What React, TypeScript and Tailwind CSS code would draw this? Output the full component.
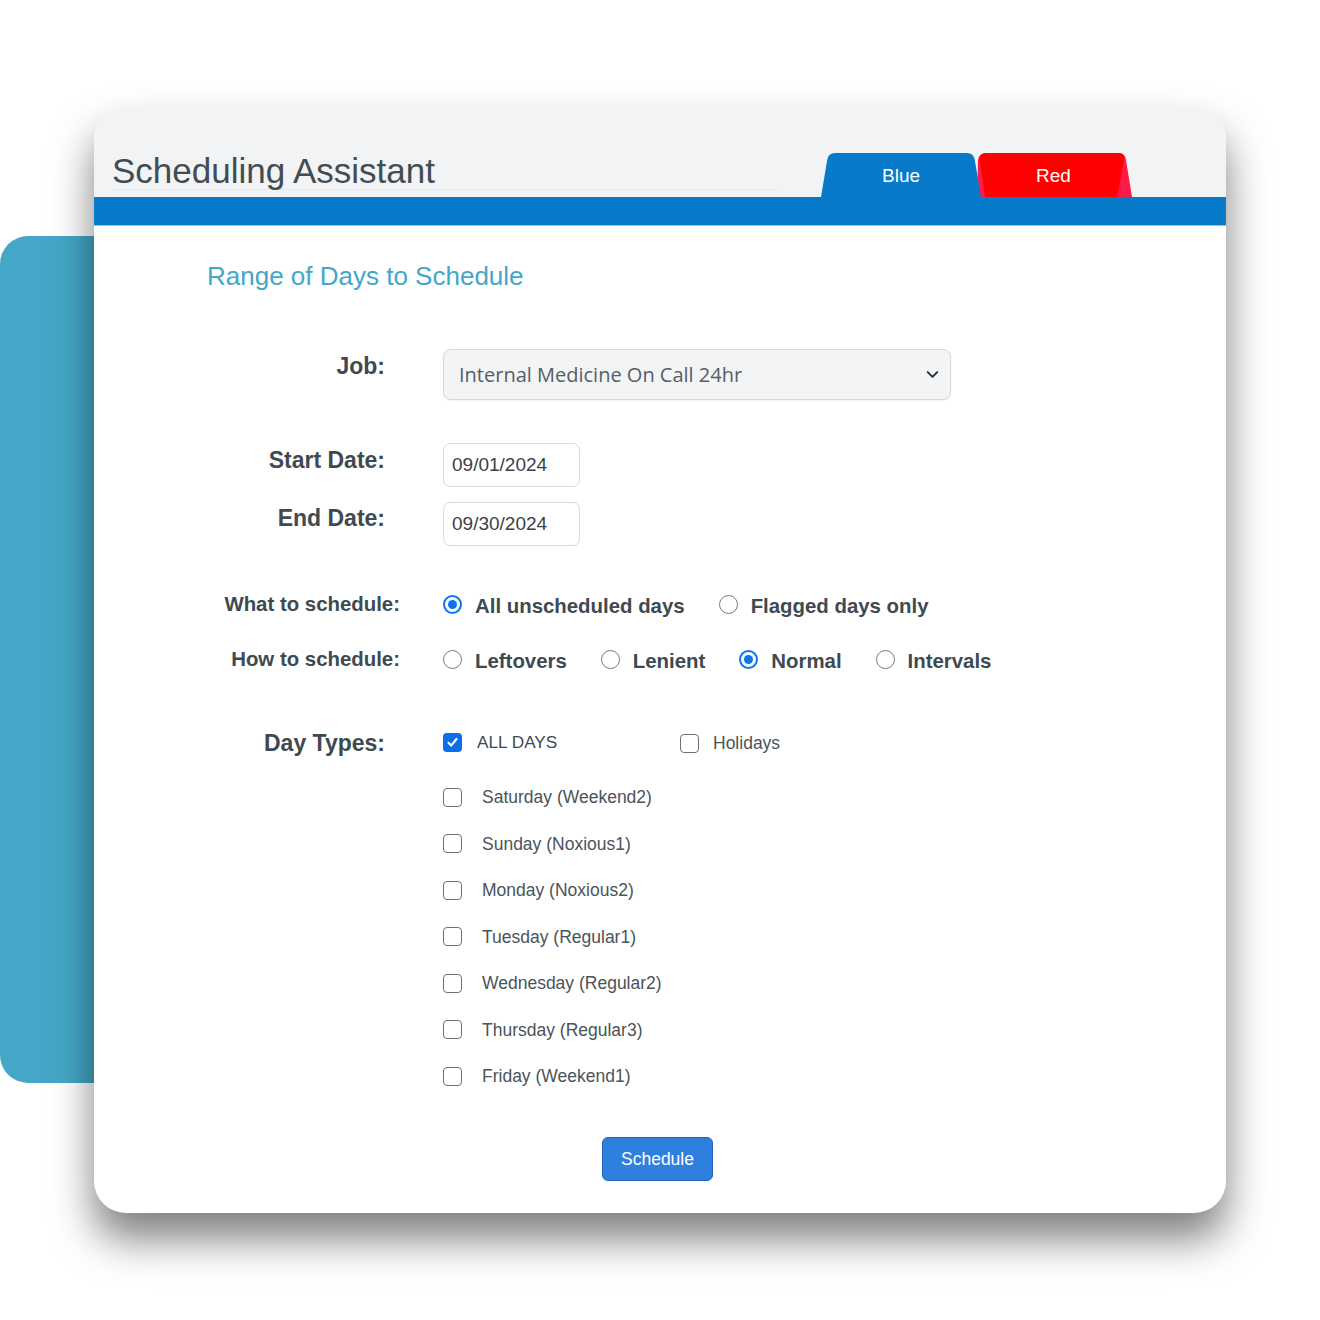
import React from "react";
import { ChevronDown } from "lucide-react";

function Radio({ checked }: { checked?: boolean }) {
  return checked ? (
    <span className="flex h-[19px] w-[19px] shrink-0 items-center justify-center rounded-full border-[2.5px] border-[#0c74ee] bg-white">
      <span className="h-[9px] w-[9px] rounded-full bg-[#0c74ee]" />
    </span>
  ) : (
    <span className="h-[19px] w-[19px] shrink-0 rounded-full border-[1.5px] border-[#7a7a7a] bg-white" />
  );
}

function Check({ checked }: { checked?: boolean }) {
  return checked ? (
    <span className="flex h-[19px] w-[19px] shrink-0 items-center justify-center rounded-[4px] bg-[#0c6fe9]">
      <svg width="13" height="13" viewBox="0 0 13 13" fill="none">
        <path d="M2.5 6.8 L5.2 9.6 L10.5 3" stroke="white" strokeWidth="2.2" strokeLinecap="round" strokeLinejoin="round" />
      </svg>
    </span>
  ) : (
    <span className="h-[19px] w-[19px] shrink-0 rounded-[4px] border-[1.5px] border-[#707070] bg-white" />
  );
}

function RadioOpt({ label, checked }: { label: string; checked?: boolean }) {
  return (
    <div className="flex items-center gap-[13px]">
      <Radio checked={checked} />
      <span className="mt-[4px] text-[20.4px] font-bold leading-[24px] text-[#3e4a50]">{label}</span>
    </div>
  );
}

const days = [
  "Saturday (Weekend2)",
  "Sunday (Noxious1)",
  "Monday (Noxious2)",
  "Tuesday (Regular1)",
  "Wednesday (Regular2)",
  "Thursday (Regular3)",
  "Friday (Weekend1)",
];

export default function App() {
  return (
    <div className="relative min-h-[1320px] w-[1320px] overflow-hidden bg-white font-['Liberation_Sans',Arial,sans-serif]">
      {/* teal backdrop panel */}
      <div className="absolute left-0 top-[236px] h-[847px] w-[140px] rounded-l-[28px] bg-[#44a7c7]" />

      <div className="relative pl-[94px] pt-[107px]">
        <div className="w-[1132px] overflow-hidden rounded-[32px] bg-white shadow-[0_26px_42px_rgba(0,0,0,0.5)]">
          {/* header */}
          <div className="flex h-[90px] items-end bg-[#f2f3f5]">
            <div className="mb-[7px] ml-[18px] w-[666px] border-b border-[#e6e7ea]">
              <h1 className="text-[35px] font-normal leading-[37px] text-[#414d53]">Scheduling Assistant</h1>
            </div>
            <div className="ml-[43px] flex items-end">
              <div className="relative z-10 flex h-[44px] w-[160px] items-center justify-center">
                <svg className="absolute inset-0" width="160" height="44" viewBox="0 0 160 44">
                  <path d="M0 44 L6.2 7 Q7.3 0 14 0 L146 0 Q152.7 0 153.8 7 L160 44 Z" fill="#077bca" />
                </svg>
                <span className="relative text-[19px] leading-none text-white">Blue</span>
              </div>
              <div className="relative -ml-[6px] flex h-[44px] w-[157px] items-center justify-center">
                <svg className="absolute inset-0" width="157" height="44" viewBox="0 0 157 44">
                  <path d="M2 44 L3 7 Q4 0 11 0 L144 0 Q150 0 151 7 L157 44 Z" fill="#ff1a48" />
                  <path d="M10 44 L4.5 5 Q6 0 12 0 L143 0 Q149 0 149.5 5 L142 44 Z" fill="#ff0000" />
                </svg>
                <span className="relative text-[19px] leading-none text-white">Red</span>
              </div>
            </div>
          </div>
          <div className="h-[28px] bg-[#077bca]" />
          <div className="h-[1px] bg-[#8cc4ea]" />

          {/* body */}
          <div className="pb-[32px] pt-[34px]">
            <h2 className="pl-[113px] text-[26px] leading-[32px] text-[#44a6c8]">Range of Days to Schedule</h2>

            {/* Job */}
            <div className="mt-[57px] flex h-[51px] items-start">
              <div className="mt-[3px] w-[291px] text-right text-[23px] font-bold leading-[28px] text-[#3e4a50]">Job:</div>
              <div className="ml-[58px] flex h-[51px] w-[508px] items-center justify-between rounded-[8px] border-[1.5px] border-[#d3d8dd] bg-[#f3f4f6] pl-[15px] pr-[8px] shadow-[0_1px_2px_rgba(0,0,0,0.06)]">
                <span className="font-['Open_Sans',sans-serif] text-[20px] text-[#555f66]">Internal Medicine On Call 24hr</span>
                <ChevronDown size={19} strokeWidth={2.6} color="#2f3438" />
              </div>
            </div>

            {/* Start Date */}
            <div className="mt-[43px] flex h-[44px] items-start">
              <div className="mt-[3px] w-[291px] text-right text-[23px] font-bold leading-[28px] text-[#3e4a50]">Start Date:</div>
              <div className="ml-[58px] flex h-[44px] w-[137px] items-center rounded-[7px] border-[1.5px] border-[#d5dbe1] bg-white pl-[8px]">
                <span className="mt-[1px] text-[19px] text-[#3a4247]">09/01/2024</span>
              </div>
            </div>

            {/* End Date */}
            <div className="mt-[15px] flex h-[44px] items-start">
              <div className="mt-[2px] w-[291px] text-right text-[23px] font-bold leading-[28px] text-[#3e4a50]">End Date:</div>
              <div className="ml-[58px] flex h-[44px] w-[137px] items-center rounded-[7px] border-[1.5px] border-[#d5dbe1] bg-white pl-[8px]">
                <span className="mt-[1px] text-[19px] text-[#3a4247]">09/30/2024</span>
              </div>
            </div>

            {/* What to schedule */}
            <div className="mt-[43px] flex h-[30px] items-center">
              <div className="w-[306px] text-right text-[20.4px] font-bold leading-[24px] text-[#3e4a50]">What to schedule:</div>
              <div className="ml-[43px] flex items-center gap-[34px]">
                <RadioOpt label="All unscheduled days" checked />
                <RadioOpt label="Flagged days only" />
              </div>
            </div>

            {/* How to schedule */}
            <div className="mt-[25px] flex h-[30px] items-center">
              <div className="w-[306px] text-right text-[20.4px] font-bold leading-[24px] text-[#3e4a50]">How to schedule:</div>
              <div className="ml-[43px] flex items-center gap-[34px]">
                <RadioOpt label="Leftovers" />
                <RadioOpt label="Lenient" />
                <RadioOpt label="Normal" checked />
                <RadioOpt label="Intervals" />
              </div>
            </div>

            {/* Day types */}
            <div className="mt-[54px] flex h-[30px] items-center">
              <div className="w-[291px] text-right text-[23px] font-bold leading-[28px] text-[#3e4a50]">Day Types:</div>
              <div className="ml-[58px] flex items-center">
                <div className="flex w-[237px] items-center gap-[15px]">
                  <Check checked />
                  <span className="text-[17.2px] text-[#3e4a50]">ALL DAYS</span>
                </div>
                <div className="flex items-center gap-[14px]">
                  <Check />
                  <span className="text-[17.5px] text-[#4a5459]">Holidays</span>
                </div>
              </div>
            </div>

            {/* days list */}
            <div className="mt-[24px] flex flex-col gap-[16.5px] pl-[349px]">
              {days.map((d) => (
                <div key={d} className="flex h-[30px] items-center gap-[20px]">
                  <Check />
                  <span className="mt-[1px] text-[17.5px] text-[#4a5459]">{d}</span>
                </div>
              ))}
            </div>

            {/* button */}
            <div className="mt-[46px] pl-[508px]">
              <button className="flex h-[44px] w-[111px] items-center justify-center rounded-[6px] border border-[#1f66bd] bg-[#2f80de] text-[17.5px] text-white">
                Schedule
              </button>
            </div>
          </div>
        </div>
      </div>
    </div>
  );
}
